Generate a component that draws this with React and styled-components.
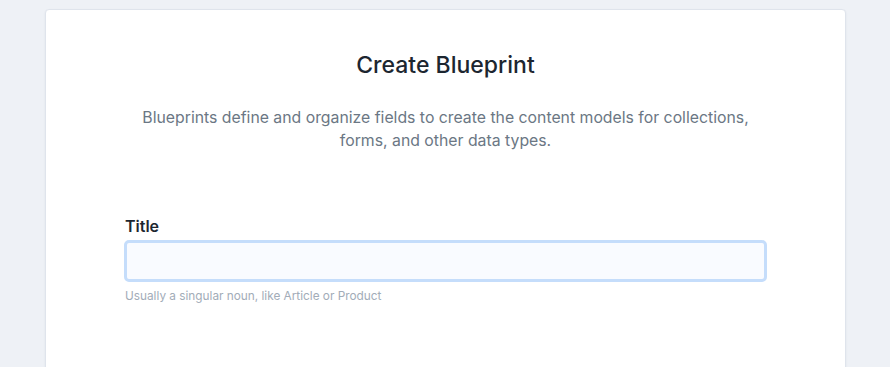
import React from "react";
import styled, { createGlobalStyle } from "styled-components";

const Global = createGlobalStyle`
  html, body { margin: 0; padding: 0; background: #eef1f6; }
  body { font-family: Inter, "Noto Sans", sans-serif; -webkit-font-smoothing: antialiased; }
  * { box-sizing: border-box; }
`;

const Page = styled.div`
  display: flex;
  justify-content: center;
  padding-top: 9px;
  height: 367px;
  overflow: hidden;
`;

const Card = styled.div`
  width: 801px;
  margin-left: 1px;
  background: #ffffff;
  border-radius: 4px;
  border: 1px solid #dfe4ec;
  box-shadow: 0 1px 2px rgba(30, 45, 70, 0.08);
  padding: 40px 78px 60px;
  min-height: 380px;
  display: flex;
  flex-direction: column;
  align-items: center;
`;

const Heading = styled.h1`
  margin: 0;
  font-size: 23px;
  line-height: 30px;
  font-weight: 500;
  color: #1c2630;
  text-align: center;
`;

const Description = styled.p`
  margin: 26px 0 0;
  max-width: 640px;
  font-size: 15.8px;
  line-height: 23px;
  color: #6b7784;
  text-align: center;
`;

const Field = styled.div`
  width: 643px;
  margin-top: 64px;
  display: flex;
  flex-direction: column;
`;

const Label = styled.label`
  font-size: 16px;
  line-height: 20px;
  font-weight: 600;
  color: #1c2630;
  margin-bottom: 4px;
  padding-left: 1px;
`;

const Input = styled.input`
  height: 42px;
  width: 100%;
  border: 3px solid #c5ddfb;
  border-radius: 5px;
  background: #f9fbff;
  outline: none;
  padding: 0 10px;
  font-family: inherit;
  font-size: 15px;
`;

const Help = styled.div`
  margin-top: 6px;
  padding-left: 1px;
  font-size: 11.8px;
  line-height: 16px;
  color: #a2acb8;
`;

export default function App() {
  return (
    <>
      <Global />
      <Page>
        <Card>
          <Heading>Create Blueprint</Heading>
          <Description>
            Blueprints define and organize fields to create the content models for collections, forms, and other data types.
          </Description>
          <Field>
            <Label>Title</Label>
            <Input type="text" />
            <Help>Usually a singular noun, like Article or Product</Help>
          </Field>
        </Card>
      </Page>
    </>
  );
}
